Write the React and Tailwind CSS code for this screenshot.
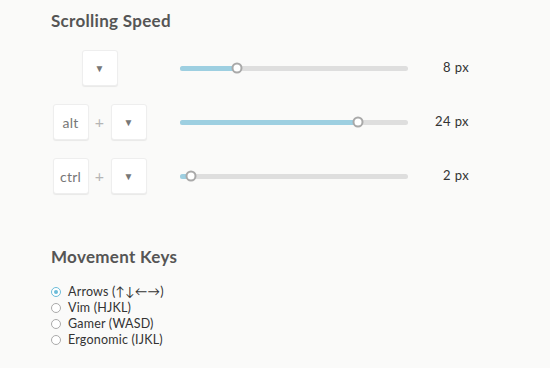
import { useState } from 'react';

const rows = [
  { mod: null, pct: 25, value: '8 px' },
  { mod: 'alt', pct: 78, value: '24 px' },
  { mod: 'ctrl', pct: 5, value: '2 px' },
];

const options = ['Arrows (↑↓←→)', 'Vim (HJKL)', 'Gamer (WASD)', 'Ergonomic (IJKL)'];

function KeyBox({ children }) {
  return (
    <div className="w-[36px] h-[36px] flex items-center justify-center bg-white rounded-[3px] border border-[#eeeeee] shadow-[0_1px_1px_rgba(0,0,0,0.07)] text-[14px] tracking-[0.2px] text-[#777]">
      {children}
    </div>
  );
}

function Slider({ pct }) {
  return (
    <div className="relative w-[228px] h-[5px] rounded-full bg-[#dedede]">
      <div className="h-full rounded-full bg-[#9dcfe1]" style={{ width: `${pct}%` }} />
      <div
        className="absolute top-1/2 w-[11px] h-[11px] -translate-x-1/2 -translate-y-1/2 rounded-full border-2 border-[#a9a9a9] bg-white"
        style={{ left: `${pct}%` }}
      />
    </div>
  );
}

export default function App() {
  const [selected, setSelected] = useState(0);

  return (
    <div className="min-h-screen bg-[#fafaf9] font-['Lato',sans-serif] pl-[51px] pt-[10px]">
      <h2 className="text-[17px] leading-[21px] font-bold tracking-[0.3px] text-[#555]">Scrolling Speed</h2>

      <div className="mt-[19px] flex flex-col gap-[18px]">
        {rows.map((r, i) => (
          <div key={i} className="flex items-center h-[36px]">
            <div className="w-[95px] ml-[1px] flex items-center justify-center">
              {r.mod && (
                <>
                  <KeyBox>{r.mod}</KeyBox>
                  <span className="w-[22px] text-center text-[16px] text-[#b5b5b5]">+</span>
                </>
              )}
              <KeyBox>
                <span className="text-[10px] text-[#777]">▼</span>
              </KeyBox>
            </div>
            <div className="ml-[33px]">
              <Slider pct={r.pct} />
            </div>
            <div className="w-[61px] text-right text-[13px] tracking-[0.4px] text-[#333]">{r.value}</div>
          </div>
        ))}
      </div>

      <h2 className="mt-[52px] text-[17px] leading-[21px] font-bold tracking-[0.3px] text-[#555]">Movement Keys</h2>

      <div className="mt-[17px] flex flex-col">
        {options.map((o, i) => (
          <label key={o} className="flex items-center h-[16px] cursor-pointer" onClick={() => setSelected(i)}>
            <span
              className={
                selected === i
                  ? 'w-[10px] h-[10px] rounded-full border border-[#6bbcd9] bg-white flex items-center justify-center'
                  : 'w-[10px] h-[10px] rounded-full border border-[#aaa] bg-white'
              }
            >
              {selected === i && <span className="w-[4px] h-[4px] rounded-full bg-[#6bbcd9]" />}
            </span>
            <span className="ml-[7px] text-[12.5px] tracking-[0.2px] text-[#333]">{o}</span>
          </label>
        ))}
      </div>
    </div>
  );
}
